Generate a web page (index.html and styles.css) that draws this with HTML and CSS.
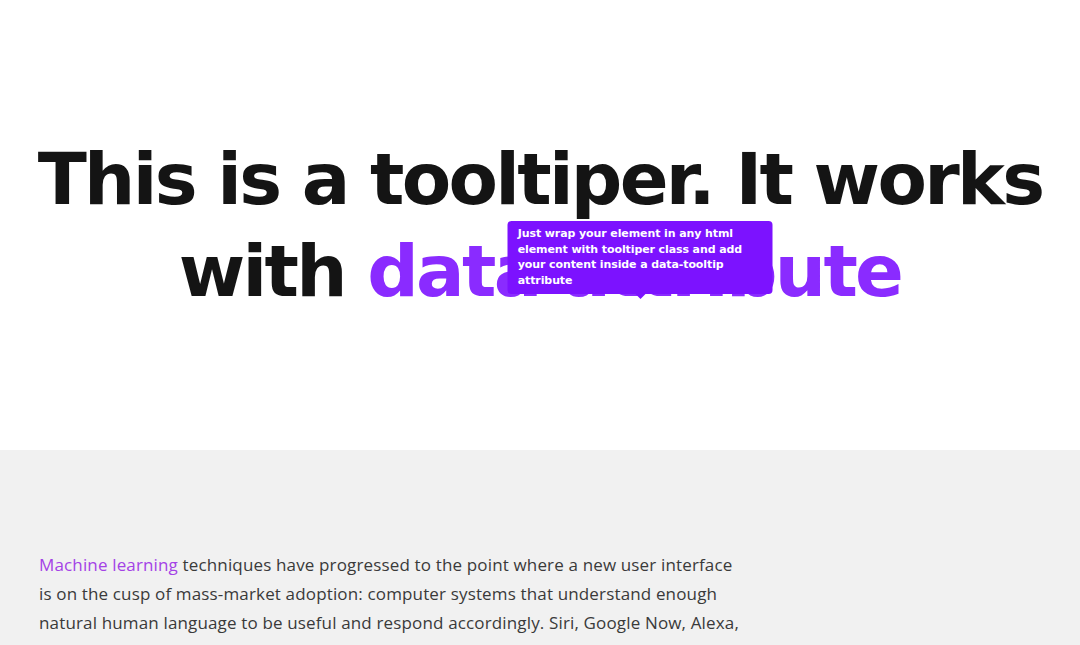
FILE: index.html
```html
<!DOCTYPE html>
<html lang="en">
<head>
<meta charset="utf-8">
<title>Tooltiper</title>
<link rel="stylesheet" href="styles.css">
</head>
<body>
<section class="hero">
  <h1 class="title">This is a tooltiper. It works with <span class="tooltiper">data attribute<span class="tip">Just wrap your element in any html element with tooltiper class and add your content inside a data-tooltip attribute</span></span></h1>
</section>
<section class="content">
  <p class="text"><a class="link" href="#">Machine learning</a> techniques have progressed to the point where a new user interface is on the cusp of mass-market adoption: computer systems that understand enough natural human language to be useful and respond accordingly. Siri, Google Now, Alexa, and Cortana are the best known examples, but conversational interfaces are spreading to many more products and services.</p>
</section>
</body>
</html>
```

FILE: styles.css
```css
* { box-sizing: border-box; }
html, body { margin: 0; padding: 0; }
body {
  font-family: "DejaVu Sans", "Noto Sans", sans-serif;
  background: #ffffff;
  color: #111111;
  overflow: hidden;
}
.hero {
  height: 450px;
  display: flex;
  align-items: center;
  justify-content: center;
  background: #ffffff;
}
.title {
  margin: 0;
  max-width: 1040px;
  font-family: "DejaVu Sans", sans-serif;
  font-weight: 700;
  font-size: 72px;
  line-height: 92px;
  letter-spacing: -2.7px;
  text-align: center;
  color: #141414;
}
.tooltiper {
  position: relative;
  color: #8a2bff;
}
.tip {
  position: absolute;
  left: 50%;
  top: -8px;
  transform: translateX(calc(-50% + 6px));
  width: 265px;
  padding: 5px 10px 6px;
  background: #7c12ff;
  border-radius: 4px;
  color: #ffffff;
  font-family: "DejaVu Sans", sans-serif;
  font-weight: 700;
  font-size: 11px;
  line-height: 15.5px;
  letter-spacing: -0.1px;
  text-align: left;
}
.tip::after {
  content: "";
  position: absolute;
  left: 50%;
  bottom: -5px;
  margin-left: -5px;
  border-left: 5px solid transparent;
  border-right: 5px solid transparent;
  border-top: 5px solid #7c12ff;
}
.content {
  background: #f1f1f1;
  padding: 100px 39px 80px;
  min-height: 400px;
}
.text {
  margin: 0;
  max-width: 710px;
  font-family: "Open Sans", sans-serif;
  font-size: 17px;
  line-height: 29px;
  letter-spacing: 0.15px;
  color: #3a3a3a;
}
.link {
  color: #a442e6;
  text-decoration: none;
}
```
